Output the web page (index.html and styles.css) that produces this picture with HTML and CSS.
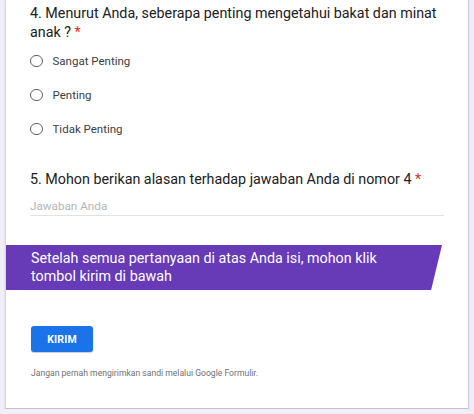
FILE: index.html
```html
<!DOCTYPE html>
<html>
<head>
<meta charset="utf-8">
<link rel="stylesheet" href="styles.css">
</head>
<body>
<div class="card">
  <div class="question q4">
    <div class="q-title">4. Menurut Anda, seberapa penting mengetahui bakat dan minat anak ? <span class="req">*</span></div>
    <div class="options">
      <label class="opt"><span class="radio"></span><span class="opt-label">Sangat Penting</span></label>
      <label class="opt"><span class="radio"></span><span class="opt-label">Penting</span></label>
      <label class="opt"><span class="radio"></span><span class="opt-label">Tidak Penting</span></label>
    </div>
  </div>
  <div class="question q5">
    <div class="q-title">5. Mohon berikan alasan terhadap jawaban Anda di nomor 4 <span class="req">*</span></div>
    <div class="answer">Jawaban Anda</div>
  </div>
  <div class="banner">Setelah semua pertanyaan di atas Anda isi, mohon klik tombol kirim di bawah</div>
  <div class="footer">
    <button class="submit">KIRIM</button>
    <div class="note">Jangan pernah mengirimkan sandi melalui Google Formulir.</div>
  </div>
</div>
</body>
</html>
```

FILE: styles.css
```css
html, body {
  margin: 0;
  padding: 0;
  background: #f0ecf8;
  font-family: Roboto, "Noto Sans", sans-serif;
}

.card {
  margin-left: 5px;
  width: 464px;
  height: 409px;
  background: #ffffff;
  border-left: 1px solid #d9d5e0;
  border-right: 1px solid #d3d0d9;
  border-bottom: 1px solid #c4c1cb;
  box-shadow: 0 1px 2px rgba(0,0,0,0.10);
  box-sizing: border-box;
  display: flex;
  flex-direction: column;
}

.question {
  padding: 0 24px;
}

.q4 {
  padding-top: 3.5px;
  padding-right: 20px;
}

.q-title {
  font-size: 14.3px;
  line-height: 19px;
  color: #202124;
}

.req {
  color: #d93025;
}

.options {
  display: flex;
  flex-direction: column;
  gap: 14px;
  margin-top: 9.5px;
}

.opt {
  display: flex;
  align-items: center;
  gap: 10px;
  height: 20px;
}

.radio {
  width: 10.5px;
  height: 10.5px;
  border: 1.75px solid #5f6368;
  border-radius: 50%;
  flex: none;
}

.opt-label {
  font-size: 11.5px;
  color: #3c4043;
}

.q5 {
  margin-top: 30.5px;
}

.answer {
  margin-top: 10.5px;
  font-size: 11.7px;
  line-height: 14px;
  color: #b5b5b5;
  padding-bottom: 2px;
  border-bottom: 1px solid #e2e2e2;
}

.banner {
  margin-top: 29px;
  width: 436px;
  height: 45px;
  box-sizing: border-box;
  background: #673ab7;
  color: #ffffff;
  font-size: 14.3px;
  line-height: 18.5px;
  padding: 3.5px 24px 0 25px;
  clip-path: polygon(0 0, 100% 0, 97.5% 100%, 0 100%);
}

.footer {
  padding: 36px 24px 0 25px;
}

.submit {
  display: block;
  width: 62px;
  height: 26px;
  border: none;
  border-radius: 3px;
  background: #1a73e8;
  color: #ffffff;
  font-family: Roboto, "Noto Sans", sans-serif;
  font-weight: 700;
  font-size: 10.5px;
  letter-spacing: 0.2px;
  padding: 0;
  box-shadow: 0 1px 1px rgba(0,0,0,0.2);
}

.note {
  margin-top: 15.5px;
  font-size: 8.6px;
  line-height: 11px;
  color: #707070;
}
```
